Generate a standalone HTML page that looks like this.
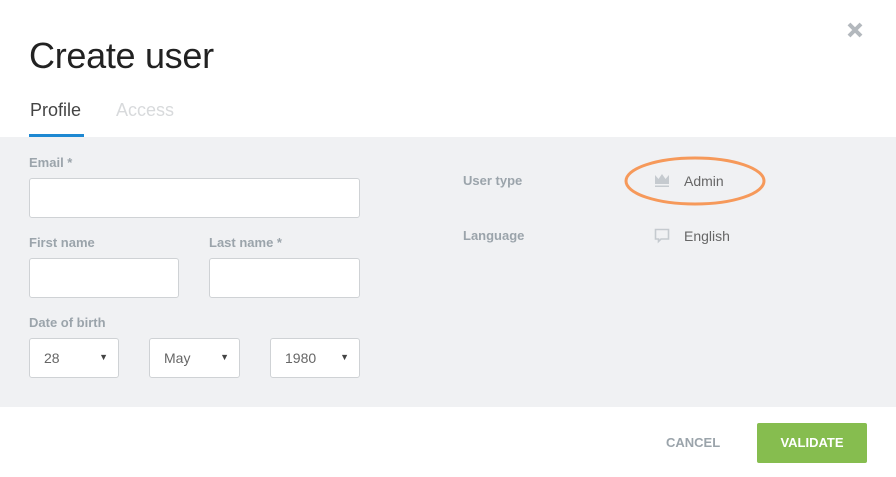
<!DOCTYPE html>
<html><head><style>
*{margin:0;padding:0;box-sizing:border-box}
body{width:896px;height:477px;background:#fff;font-family:"Liberation Sans",sans-serif;position:relative;overflow:hidden}
.a{position:absolute}
.lbl{position:absolute;font-size:13px;font-weight:bold;color:#9ba4ab}
.in{position:absolute;background:#fff;border:1px solid #cfd2d5;border-radius:3px}
.sel{position:absolute;background:#fff;border:1px solid #cfd2d5;border-radius:3px;font-size:14px;color:#666;padding:11px 0 0 14px}
.sel span{position:absolute;right:10px;top:13px;font-size:9px;color:#444}
</style></head><body>
<div class="a" style="left:29px;top:35px;font-size:36px;color:#222;letter-spacing:-0.3px">Create user</div>
<div class="a" style="left:30px;top:100px;font-size:18px;color:#444">Profile</div>
<div class="a" style="left:116px;top:100px;font-size:18px;color:#d8dadc">Access</div>
<div class="a" style="left:29px;top:134px;width:55px;height:3px;background:#1e88d2"></div>
<svg class="a" style="left:846px;top:21px" width="18" height="18"><path d="M3 3L15 15M15 3L3 15" stroke="#b3b8bd" stroke-width="4"/></svg>
<div class="a" style="left:0;top:137px;width:896px;height:270px;background:#f0f1f3"></div>
<div class="lbl" style="left:29px;top:155px">Email *</div>
<div class="in" style="left:29px;top:178px;width:331px;height:40px"></div>
<div class="lbl" style="left:29px;top:235px">First name</div>
<div class="lbl" style="left:209px;top:235px">Last name *</div>
<div class="in" style="left:29px;top:258px;width:150px;height:40px"></div>
<div class="in" style="left:209px;top:258px;width:151px;height:40px"></div>
<div class="lbl" style="left:29px;top:315px">Date of birth</div>
<div class="sel" style="left:29px;top:338px;width:90px;height:40px">28<span>▼</span></div>
<div class="sel" style="left:149px;top:338px;width:91px;height:40px">May<span>▼</span></div>
<div class="sel" style="left:270px;top:338px;width:90px;height:40px">1980<span>▼</span></div>
<div class="lbl" style="left:463px;top:173px">User type</div>
<div class="lbl" style="left:463px;top:228px">Language</div>
<svg class="a" style="left:654px;top:173px" width="16" height="15"><path d="M1 2L4.5 6L8 1L11.5 6L15 2V11H1Z" fill="#c5cacf"/><rect x="1" y="12.5" width="14" height="1.5" fill="#c5cacf"/></svg>
<svg class="a" style="left:654px;top:228px" width="16" height="16"><path d="M1.5 1.5H14.5V11H7L4.5 13.5V11H1.5Z" fill="none" stroke="#c5cacf" stroke-width="1.6"/></svg>
<div class="a" style="left:684px;top:173px;font-size:14px;color:#666">Admin</div>
<div class="a" style="left:684px;top:228px;font-size:14px;color:#666">English</div>
<svg class="a" style="left:620px;top:152px" width="150" height="58"><ellipse cx="75" cy="29" rx="69" ry="23" fill="none" stroke="#f6995a" stroke-width="3"/></svg>
<div class="a" style="left:666px;top:435px;font-size:13px;font-weight:bold;color:#9ba4ab">CANCEL</div>
<div class="a" style="left:757px;top:423px;width:110px;height:40px;background:#86bd4f;border-radius:2px;color:#fff;font-size:13px;font-weight:bold;text-align:center;line-height:40px">VALIDATE</div>
</body></html>
